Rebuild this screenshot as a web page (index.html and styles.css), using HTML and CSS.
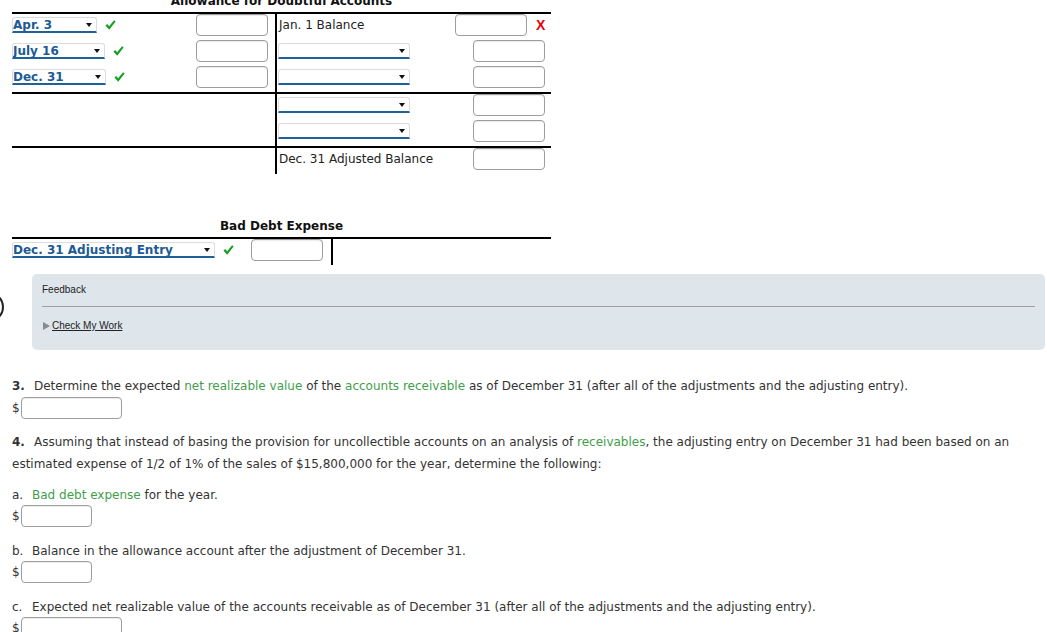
FILE: index.html
```html
<!DOCTYPE html>
<html lang="en">
<head>
    <meta charset="UTF-8">
    <meta name="viewport" content="width=device-width, initial-scale=1.0">
    <title>Allowance for Doubtful Accounts</title>
    <link rel="stylesheet" href="styles.css">
</head>
<body>
    <!-- side tab peeking in from the left -->
    <span class="edge-tab"></span>

    <div class="page">
        <!-- Allowance T-account -->
        <div class="t-account">
            <div class="t-title">Allowance for Doubtful Accounts</div>
            <div class="t-section">
                <div class="t-side t-debit">
                    <div class="t-row">
                        <span class="pick pick-apr"><select><option>Apr. 3</option></select></span>
                        <svg class="check" viewBox="0 0 12 12"><path d="M0.5 6.6 L2.4 4.9 L4.5 7.3 L9.9 0.8 L11.6 2.3 L4.6 11.2 Z"/></svg>
                        <input class="amount" type="text">
                    </div>
                    <div class="t-row">
                        <span class="pick pick-jul"><select><option>July 16</option></select></span>
                        <svg class="check" viewBox="0 0 12 12"><path d="M0.5 6.6 L2.4 4.9 L4.5 7.3 L9.9 0.8 L11.6 2.3 L4.6 11.2 Z"/></svg>
                        <input class="amount" type="text">
                    </div>
                    <div class="t-row">
                        <span class="pick pick-dec"><select><option>Dec. 31</option></select></span>
                        <svg class="check" viewBox="0 0 12 12"><path d="M0.5 6.6 L2.4 4.9 L4.5 7.3 L9.9 0.8 L11.6 2.3 L4.6 11.2 Z"/></svg>
                        <input class="amount" type="text">
                    </div>
                </div>
                <div class="t-side t-credit">
                    <div class="t-row">
                        <span class="t-label">Jan. 1 Balance</span>
                        <input class="amount" type="text">
                        <span class="wrong">X</span>
                    </div>
                    <div class="t-row">
                        <span class="pick pick-blank"><select><option></option></select></span>
                        <input class="amount" type="text">
                    </div>
                    <div class="t-row">
                        <span class="pick pick-blank"><select><option></option></select></span>
                        <input class="amount" type="text">
                    </div>
                </div>
            </div>
            <div class="t-section">
                <div class="t-side t-debit"></div>
                <div class="t-side t-credit">
                    <div class="t-row">
                        <span class="pick pick-blank"><select><option></option></select></span>
                        <input class="amount" type="text">
                    </div>
                    <div class="t-row">
                        <span class="pick pick-blank"><select><option></option></select></span>
                        <input class="amount" type="text">
                    </div>
                </div>
            </div>
            <div class="t-section">
                <div class="t-side t-debit"></div>
                <div class="t-side t-credit">
                    <div class="t-row">
                        <span class="t-label">Dec. 31 Adjusted Balance</span>
                        <input class="amount" type="text">
                    </div>
                </div>
            </div>
        </div>

        <!-- Bad Debt Expense T-account -->
        <div class="t-account t-expense">
            <div class="t-title">Bad Debt Expense</div>
            <div class="t-section">
                <div class="t-side t-debit">
                    <div class="t-row">
                        <span class="pick pick-entry"><select><option>Dec. 31 Adjusting Entry</option></select></span>
                        <svg class="check" viewBox="0 0 12 12"><path d="M0.5 6.6 L2.4 4.9 L4.5 7.3 L9.9 0.8 L11.6 2.3 L4.6 11.2 Z"/></svg>
                        <input class="amount" type="text">
                    </div>
                </div>
                <div class="t-side t-credit"></div>
            </div>
        </div>

        <div class="feedback">
            <div class="feedback-title">Feedback</div>
            <a href="#" class="check-work"><span class="arrow"></span><span class="check-link">Check My Work</span></a>
        </div>

        <div class="question q3">
            <p><span class="num">3.</span>Determine the expected <span class="term">net realizable value</span> of the <span class="term">accounts receivable</span> as of December 31 (after all of the adjustments and the adjusting entry).</p>
            <div class="answer">$<input class="amount amount-wide" type="text"></div>
        </div>

        <div class="question q4">
            <p><span class="num">4.</span>Assuming that instead of basing the provision for uncollectible accounts on an analysis of <span class="term">receivables</span>, the adjusting entry on December 31 had been based on an estimated expense of 1/2 of 1% of the sales of $15,800,000 for the year, determine the following:</p>
        </div>

        <div class="question sub">
            <p><span class="letter">a.</span><span class="term">Bad debt expense</span> for the year.</p>
            <div class="answer">$<input class="amount amount-small" type="text"></div>
        </div>
        <div class="question sub">
            <p><span class="letter">b.</span>Balance in the allowance account after the adjustment of December 31.</p>
            <div class="answer">$<input class="amount amount-small" type="text"></div>
        </div>
        <div class="question sub">
            <p><span class="letter">c.</span>Expected net realizable value of the accounts receivable as of December 31 (after all of the adjustments and the adjusting entry).</p>
            <div class="answer">$<input class="amount amount-wide" type="text"></div>
        </div>
    </div>
</body>
</html>
```

FILE: styles.css
```css
* {
    margin: 0;
    padding: 0;
    box-sizing: border-box;
}

body {
    font-family: "DejaVu Sans", Verdana, sans-serif;
    font-size: 12px;
    color: #333;
    background: #fff;
    overflow: hidden;
    position: relative;
}

.page {
    padding: 0 2px 0 12px;
}

/* Tab cut off at the left edge */
.edge-tab {
    position: absolute;
    left: -26px;
    top: 292px;
    width: 30px;
    height: 30px;
    border: 2px solid #222;
    border-radius: 50%;
}

/* T-accounts */
.t-account {
    width: 539px;
}

.t-title {
    margin-top: -7px;
    height: 19px;
    line-height: 16px;
    text-align: center;
    font-weight: bold;
    color: #111;
}

.t-section {
    display: grid;
    grid-template-columns: 265px 1fr;
    border-top: 2px solid #000;
}

.t-debit {
    border-right: 2px solid #000;
    padding-right: 7px;
}

.t-credit {
    padding: 0 6px 0 1px;
}

.t-row {
    display: flex;
    align-items: center;
    height: 22px;
    margin-bottom: 4px;
}

.t-row .amount {
    margin-left: auto;
}

.t-label {
    margin-left: 1px;
    color: #222;
}

.wrong {
    width: 18px;
    padding-left: 9px;
    font-family: "Liberation Sans", Arial, sans-serif;
    font-weight: bold;
    font-size: 14px;
    color: #e8000b;
}

/* Bad Debt Expense */
.t-expense {
    margin-top: 43px;
}

.t-expense .t-title {
    margin-top: 0;
    height: 20px;
    padding-top: 1px;
}

.t-expense .t-section {
    grid-template-columns: 321px 1fr;
}

.t-expense .t-debit {
    padding-right: 8px;
}

/* Dropdowns */
.pick {
    position: relative;
    display: inline-block;
    height: 16px;
    background: #fff;
    border: 1px solid #dcdcdc;
    border-bottom: 2px solid #1f6299;
    border-radius: 3px 3px 0 0;
}

.pick select {
    appearance: none;
    -webkit-appearance: none;
    width: 100%;
    height: 100%;
    border: none;
    outline: none;
    background: transparent;
    font-family: "DejaVu Sans", Verdana, sans-serif;
    font-size: 12px;
    font-weight: bold;
    color: #1c5a96;
    padding: 0 14px 0 0;
    line-height: 13px;
}

.pick::after {
    content: "";
    position: absolute;
    right: 4px;
    top: 5px;
    border-left: 3.5px solid transparent;
    border-right: 3.5px solid transparent;
    border-top: 4px solid #111;
    pointer-events: none;
}

.pick-apr { width: 85px; }
.pick-jul { width: 93px; }
.pick-dec { width: 94px; }
.pick-blank { width: 132px; }
.pick-entry { width: 203px; }

.check {
    width: 11px;
    height: 12px;
    margin-left: 8px;
    fill: #15a024;
}

/* Answer boxes */
.amount {
    width: 72px;
    height: 22px;
    border: 1px solid #9d9d9d;
    border-radius: 4px;
    background: #fff;
    box-shadow: inset 0 1px 1px rgba(0, 0, 0, 0.08);
    outline: none;
}

.amount-wide {
    width: 101px;
}

.amount-small {
    width: 71px;
}

/* Feedback panel */
.feedback {
    margin: 9px 0 0 20px;
    height: 76px;
    padding: 10px 10px 0;
    background: #dee5eb;
    border-radius: 5px;
    font-family: "Liberation Sans", Arial, sans-serif;
    font-size: 10px;
    color: #222;
}

.feedback-title {
    line-height: 12px;
    padding-bottom: 10px;
    border-bottom: 1px solid #9aa0a4;
}

.check-work {
    display: inline-flex;
    align-items: center;
    margin-top: 13px;
    line-height: 12px;
    color: #222;
    text-decoration: none;
}

.arrow {
    width: 0;
    height: 0;
    margin: 0 2px 0 1px;
    border-top: 4px solid transparent;
    border-bottom: 4px solid transparent;
    border-left: 7px solid #8a8a8a;
}

.check-link {
    text-decoration: underline;
}

/* Questions */
.question p {
    line-height: 22px;
    padding-top: 1px;
    margin-bottom: -1px;
    color: #333;
}

.num {
    display: inline-block;
    width: 22px;
    font-weight: bold;
}

.letter {
    display: inline-block;
    width: 20px;
}

.term {
    color: #3f9e4b;
}

.answer {
    display: flex;
    align-items: center;
    margin-top: 1px;
    color: #333;
}

.answer .amount {
    margin-left: 1px;
}

.q3 {
    margin-top: 24px;
}

.q4 {
    margin-top: 11px;
}

.q4 + .sub {
    margin-top: 9px;
}

.sub {
    margin-top: 12px;
}

.sub .answer {
    margin-top: 0;
}
```
